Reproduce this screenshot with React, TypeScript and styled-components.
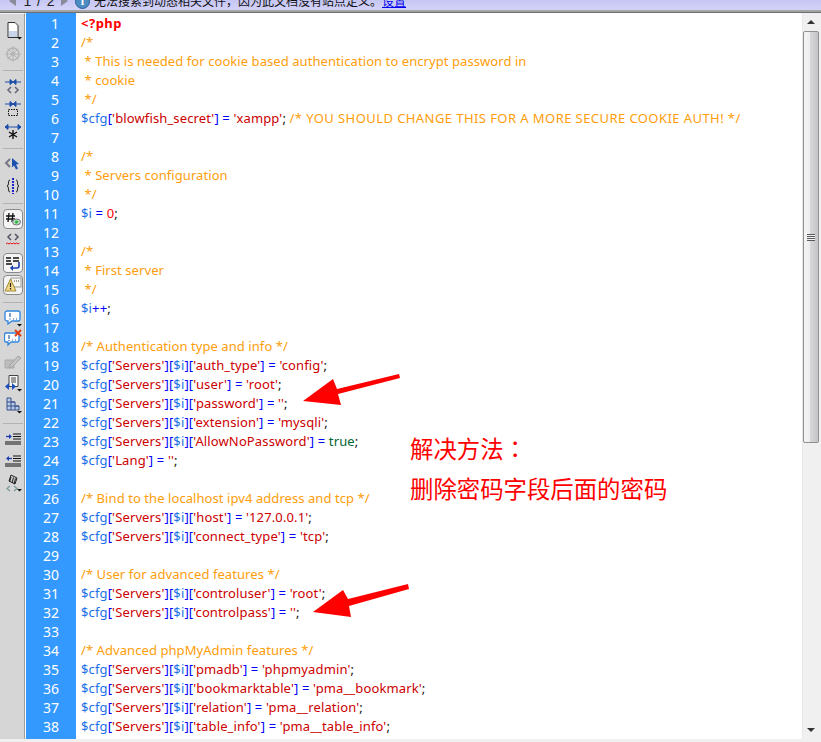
import React from 'react';
import styled, { createGlobalStyle } from 'styled-components';

const GlobalStyle = createGlobalStyle`
  html, body {
    margin: 0;
    padding: 0;
    width: 821px;
    height: 742px;
    overflow: hidden;
    background: #f0f0f0;
  }
`;

const Window = styled.div`
  position: relative;
  width: 821px;
  height: 742px;
  overflow: hidden;
  display: flex;
  flex-direction: column;
`;

const InfoBar = styled.div`
  height: 10px;
  flex: none;
  overflow: hidden;
  display: flex;
  align-items: flex-end;
  background: linear-gradient(#c6c6f4, #d3d3f8);
  font: 12px 'Noto Sans CJK SC', sans-serif;
  color: #111;
`;

const InfoInner = styled.div`
  height: 16px;
  margin-bottom: 1px;
  flex: none;
  display: flex;
  align-items: center;
  line-height: 16px;
`;

const Pager = styled.span`
  width: 34px;
  text-align: center;
  font-family: 'Liberation Sans', sans-serif;
  font-size: 14px;
  word-spacing: 2px;
  color: #222;
`;

const PagerArrow = styled.span<{ $left?: boolean }>`
  width: 0;
  height: 0;
  margin: ${(p) => (p.$left ? '0 6px 0 9px' : '0 7px 0 5px')};
  border-top: 5px solid transparent;
  border-bottom: 5px solid transparent;
  ${(p) => (p.$left ? 'border-right: 7px solid #8a8a98;' : 'border-left: 7px solid #8a8a98;')}
`;

const InfoIcon = styled.span`
  width: 13px;
  height: 13px;
  margin-right: 4px;
  border-radius: 50%;
  border: 1px solid #2a5f96;
  background: #4a8cc4;
  color: #fff;
  font: bold 12px/13px 'Liberation Serif', serif;
  text-align: center;
`;

const InfoLink = styled.a`
  color: #0000ee;
  text-decoration: underline;
`;

const BarEdge = styled.div`
  height: 3px;
  flex: none;
  background: linear-gradient(#a8a8a8 0, #a0a0a0 66%, #6f6f6f 66%);
`;

const Main = styled.div`
  height: 726px;
  flex: none;
  display: flex;
  background: #fff;
`;

const Sidebar = styled.div`
  width: 25px;
  flex: none;
  box-sizing: border-box;
  padding: 7px 0 0 1px;
  background: #d6d6d6;
  border-top: 1px solid #f2f2f2;
  border-right: 1px solid #9c9c9c;
  display: flex;
  flex-direction: column;
  align-items: center;
`;

const ToolSlot = styled.div<{ $gap?: number; $boxed?: boolean }>`
  width: 20px;
  height: 20px;
  flex: none;
  box-sizing: border-box;
  margin-top: ${(p) => p.$gap ?? 0}px;
  display: flex;
  align-items: center;
  justify-content: center;
  ${(p) =>
    p.$boxed &&
    `
    border: 1px solid #8a8a8a;
    border-radius: 4px;
    background: #f4f4f4;
  `}
`;

const ToolSep = styled.div<{ $gap: number }>`
  width: 20px;
  height: 1px;
  flex: none;
  margin-top: ${(p) => p.$gap}px;
  background: #b2b2b2;
`;

const WhiteEdge = styled.div`
  width: 1px;
  flex: none;
  background: #fff;
`;

const Gutter = styled.div`
  width: 50px;
  flex: none;
  box-sizing: border-box;
  padding: 1px 17px 0 0;
  overflow: hidden;
  background: #3399ff;
  color: #fff;
  text-align: right;
  font: 14px/19px 'Noto Sans', sans-serif;
`;

const Code = styled.div`
  flex: 1;
  min-width: 0;
  box-sizing: border-box;
  padding: 1px 0 0 5px;
  overflow: hidden;
  background: #fff;
  font: 13px/19px 'Noto Sans', sans-serif;
  letter-spacing: 0.13px;
`;

const CodeLine = styled.div`
  height: 19px;
  white-space: pre;
`;

const tokenColors: Record<string, string> = {
  tag: '#ff0000',
  comment: '#ff9d0a',
  shout: '#ff9d0a',
  variable: '#1c72e8',
  string: '#cc0000',
  op: '#0000ff',
  number: '#ff0000',
  bool: '#006633',
  plain: '#111111',
};

const tokenSpacing: Record<string, string> = {
  tag: '0.5px',
  comment: '0.07px',
  shout: '0.43px',
};

const Token = styled.span<{ $kind: string }>`
  color: ${(p) => tokenColors[p.$kind]};
  font-weight: ${(p) => (p.$kind === 'tag' ? 700 : 400)};
  letter-spacing: ${(p) => tokenSpacing[p.$kind] ?? 'inherit'};
`;

const Scrollbar = styled.div`
  width: 16px;
  flex: none;
  display: flex;
  flex-direction: column;
  align-items: stretch;
  background: #f0f0f0;
  border-left: 1px solid #e8e8e8;
  box-sizing: content-box;
`;

const ScrollButton = styled.div`
  height: 18px;
  flex: none;
  display: flex;
  align-items: center;
  justify-content: center;
`;

const ScrollArrow = styled.span<{ $down?: boolean }>`
  width: 0;
  height: 0;
  border-left: 4px solid transparent;
  border-right: 4px solid transparent;
  ${(p) => (p.$down ? 'border-top: 4px solid #333;' : 'border-bottom: 4px solid #333;')}
`;

const Thumb = styled.div`
  height: 412px;
  flex: none;
  box-sizing: border-box;
  display: flex;
  align-items: center;
  justify-content: center;
  border: 1px solid #8e8f8f;
  border-radius: 2px;
  background: linear-gradient(90deg, #f4f4f4 0, #eeeeee 40%, #d8d8da 45%, #c4c4c8 100%);
`;

const Grip = styled.div`
  width: 8px;
  height: 7px;
  background: repeating-linear-gradient(#59595c 0, #59595c 1px, #f2f2f2 1px, #f2f2f2 2px);
`;

const ScrollRest = styled.div`
  flex: 1;
`;

const RightEdge = styled.div`
  width: 2px;
  flex: none;
  background: #f0f0f0;
`;

const BottomEdge = styled.div`
  flex: 1;
  background: #f0f0f0;
`;

const Note = styled.div`
  position: absolute;
  left: 410px;
  top: 428px;
  color: #ff0000;
  font: 23.400px/40px 'Noto Sans CJK SC', sans-serif;
  white-space: nowrap;
`;

const NoteColon = styled.span`
  font-family: 'Noto Sans CJK TC', sans-serif;
`;

const ArrowLayer = styled.svg`
  position: absolute;
  left: 0;
  top: 0;
  pointer-events: none;
`;

const source = [
  '<?php',
  '/*',
  ' * This is needed for cookie based authentication to encrypt password in',
  ' * cookie',
  ' */',
  "$cfg['blowfish_secret'] = 'xampp'; /* YOU SHOULD CHANGE THIS FOR A MORE SECURE COOKIE AUTH! */",
  '',
  '/*',
  ' * Servers configuration',
  ' */',
  '$i = 0;',
  '',
  '/*',
  ' * First server',
  ' */',
  '$i++;',
  '',
  '/* Authentication type and info */',
  "$cfg['Servers'][$i]['auth_type'] = 'config';",
  "$cfg['Servers'][$i]['user'] = 'root';",
  "$cfg['Servers'][$i]['password'] = '';",
  "$cfg['Servers'][$i]['extension'] = 'mysqli';",
  "$cfg['Servers'][$i]['AllowNoPassword'] = true;",
  "$cfg['Lang'] = '';",
  '',
  '/* Bind to the localhost ipv4 address and tcp */',
  "$cfg['Servers'][$i]['host'] = '127.0.0.1';",
  "$cfg['Servers'][$i]['connect_type'] = 'tcp';",
  '',
  '/* User for advanced features */',
  "$cfg['Servers'][$i]['controluser'] = 'root';",
  "$cfg['Servers'][$i]['controlpass'] = '';",
  '',
  '/* Advanced phpMyAdmin features */',
  "$cfg['Servers'][$i]['pmadb'] = 'phpmyadmin';",
  "$cfg['Servers'][$i]['bookmarktable'] = 'pma__bookmark';",
  "$cfg['Servers'][$i]['relation'] = 'pma__relation';",
  "$cfg['Servers'][$i]['table_info'] = 'pma__table_info';",
  "$cfg['Servers'][$i]['table_coords'] = 'pma__table_coords';",
];

const tokenize = (line: string): { kind: string; text: string }[] => {
  if (line === '<?php') return [{ kind: 'tag', text: line }];
  if (/^\s*(\/\*|\*)/.test(line)) return [{ kind: 'comment', text: line }];
  return line
    .split(/(\/\*.*\*\/|'[^']*'|\$\w+|\+\+|[[\]=]|true|\b\d+\b)/)
    .filter(Boolean)
    .map((text) => {
      let kind = 'plain';
      if (text.startsWith('/*')) kind = 'shout';
      else if (text.startsWith("'")) kind = 'string';
      else if (text.startsWith('$')) kind = 'variable';
      else if (/^(\+\+|\[|\]|=)$/.test(text)) kind = 'op';
      else if (text === 'true') kind = 'bool';
      else if (/^\d+$/.test(text)) kind = 'number';
      return { kind, text };
    });
};

const Icon = ({ children }: { children: React.ReactNode }) => (
  <svg width="18" height="18" viewBox="0 0 18 18" fill="none">
    {children}
  </svg>
);

const DropTick = () => <path d="M13 15h5l-2.500 2.500z" fill="#111" />;

const CodeChevrons = ({ y = 11, color = '#667' }: { y?: number; color?: string }) => (
  <path d={`M7 ${y - 3}l-3 3 3 3M11 ${y - 3}l3 3-3 3`} stroke={color} strokeWidth="1.500" />
);

const CollapseArrows = () => (
  <path d="M1 4h5M6 1.500v5L9 4zM17 4h-5M12 1.500v5L9 4z" fill="#1f4fa8" stroke="#1f4fa8" />
);

const icons: Record<string, React.ReactNode> = {
  page: (
    <>
      <path d="M4 .500h7l3 3v12H4z" fill="#fff" stroke="#333" />
      <path d="M5 9h8v6H5z" fill="#c8d4e8" />
      <DropTick />
    </>
  ),
  wheel: (
    <>
      <circle cx="9" cy="9" r="6" stroke="#b4b4b4" strokeWidth="1.500" />
      <circle cx="9" cy="9" r="2" stroke="#b4b4b4" />
      <path d="M9 1v16M1 9h16M3.500 3.500l11 11M14.500 3.500l-11 11" stroke="#b4b4b4" />
    </>
  ),
  collapseCode: (
    <>
      <CollapseArrows />
      <CodeChevrons y={12} />
    </>
  ),
  collapseBox: (
    <>
      <CollapseArrows />
      <rect x="4.500" y="9.500" width="9" height="6" stroke="#111" strokeDasharray="1.500 1" />
    </>
  ),
  collapseStar: (
    <>
      <path d="M1 4h16M4 1.500v5L1 4zM14 1.500v5L17 4z" fill="#1f4fa8" stroke="#1f4fa8" />
      <path d="M9 7v9M5 9l8 5M13 9l-8 5" stroke="#111" strokeWidth="1.400" />
    </>
  ),
  cursorCode: (
    <>
      <path d="M6 5L2 9l4 4" stroke="#778" strokeWidth="2" />
      <path d="M8 4l7 6-3 .500 2 4-2 1-2-4-2 2z" fill="#1d4fb0" />
    </>
  ),
  braces: (
    <>
      <path d="M6 3C3.500 3 5.500 8.500 3 9c2.500.500.500 6 3 6M12 3c2.500 0 .500 5.500 3 6-2.500.500-.500 6-3 6" stroke="#111" />
      <path d="M9 1v16" stroke="#2222cc" strokeWidth="2" strokeDasharray="2 1" />
    </>
  ),
  hash: (
    <>
      <path d="M5 3L4 12M9 3l-1 9M2 6h9M2 9h9" stroke="#111" strokeWidth="1.300" />
      <ellipse cx="12.500" cy="12" rx="4" ry="3" fill="#bcd8bc" stroke="#778" />
      <circle cx="12.500" cy="12" r="1.600" fill="#22bb44" />
    </>
  ),
  redCode: (
    <>
      <CodeChevrons y={7} color="#556" />
      <path d="M2 14l1.500-1 1.500 1 1.500-1 1.500 1 1.500-1 1.500 1 1.500-1 1.500 1 1.500-1" stroke="#e01010" />
    </>
  ),
  wrap: (
    <>
      <path d="M2 4h5M9 4h6M2 7h5M9 7h6M2 10h6" stroke="#111" strokeWidth="1.300" />
      <path d="M15 8v4c0 1.500-1 2-2 2H7" stroke="#1c3fb0" strokeWidth="1.600" />
      <path d="M9 11l-3 3 3 3z" fill="#1c3fb0" />
    </>
  ),
  warning: (
    <>
      <rect x="7" y="2" width="10" height="9" fill="#f6f6ee" stroke="#999" />
      <path d="M10 5h1M12 5h1M14 5h1" stroke="#444" />
      <path d="M6.500 3L1 15h11z" fill="#f2d884" stroke="#a08a30" />
      <path d="M6.500 7v4M6.500 12v1.500" stroke="#222" strokeWidth="1.200" />
    </>
  ),
  bubble: (
    <>
      <path d="M3 2h11c1 0 2 1 2 2v6c0 1-1 2-2 2H8l-4 3v-3H3c-1 0-2-1-2-2V4c0-1 1-2 2-2z" fill="#fff" stroke="#2f86dc" strokeWidth="1.300" />
      <path d="M6 4v4M6 9.500v1M9 10h1M12 10h1" stroke="#1c50a0" strokeWidth="1.100" />
      <DropTick />
    </>
  ),
  bubbleX: (
    <>
      <path d="M2 4h11c1 0 2 1 2 2v5c0 1-1 2-2 2H7l-3 3v-3H2c-1 0-1.500-1-1.500-2V6C.5 5 1 4 2 4z" fill="#fff" stroke="#2f86dc" strokeWidth="1.300" />
      <path d="M5 6v4M5 11v1M8 11h1M11 11h1" stroke="#1c50a0" strokeWidth="1.100" />
      <path d="M11 1l6 6M17 1l-6 6" stroke="#e03c14" strokeWidth="2" />
    </>
  ),
  pencil: (
    <>
      <path d="M1 7h9v8H1z" fill="#bcbcbc" stroke="#aaa" />
      <path d="M6 12l8-9 3 2-9 9-3 1z" fill="#c4c4c4" stroke="#a4a4a4" />
    </>
  ),
  docCode: (
    <>
      <path d="M5 1.500h9v11H5z" fill="#f8f8f8" stroke="#444" />
      <path d="M7 4h5M7 6h5M7 8h5" stroke="#444" />
      <path d="M5 9l-4 3.500L5 16z" fill="#1c4fc0" />
      <path d="M8 9l4 3.500L8 16z" fill="#1c4fc0" />
      <DropTick />
    </>
  ),
  table: (
    <>
      <path d="M3 2h4v4h4v4h4v4H3z" fill="#b8cce8" stroke="#3a4f88" />
      <path d="M3 6h8M3 10h12M7 6v8M11 10v4" stroke="#3a4f88" />
      <DropTick />
    </>
  ),
  indent: (
    <>
      <path d="M1 15h16M1 13h16M9 10h8M9 7.500h8M9 5h8" stroke="#111" />
      <path d="M2 7.500h4" stroke="#1c3fb0" strokeWidth="1.300" />
      <path d="M5 5l3 2.500L5 10z" fill="#1c3fb0" />
    </>
  ),
  outdent: (
    <>
      <path d="M1 15h16M1 13h16M9 10h8M9 7.500h8M9 5h8" stroke="#111" />
      <path d="M4 7.500h4" stroke="#1c3fb0" strokeWidth="1.300" />
      <path d="M5 5L2 7.500 5 10z" fill="#1c3fb0" />
    </>
  ),
  brush: (
    <>
      <path d="M7 1l6 3-2 6-6-3z" fill="#ccc" stroke="#222" />
      <path d="M7 3L5.500 8M9.500 3.500L8 9M11.500 4.500L10 10" stroke="#222" />
      <path d="M6 12l-3 2.500L6 17M10 12l3 2.500L10 17" stroke="#7d9a9a" strokeWidth="1.300" />
      <DropTick />
    </>
  ),
};

type ToolEntry = { icon?: string; gap: number; boxed?: boolean };

const tools: ToolEntry[] = [
  { icon: 'page', gap: 0 },
  { icon: 'wheel', gap: 3 },
  { gap: 6 },
  { icon: 'collapseCode', gap: 6 },
  { icon: 'collapseBox', gap: 2 },
  { icon: 'collapseStar', gap: 3 },
  { gap: 6 },
  { icon: 'cursorCode', gap: 4 },
  { icon: 'braces', gap: 3 },
  { gap: 7 },
  { icon: 'hash', gap: 5, boxed: true },
  { icon: 'redCode', gap: 0 },
  { icon: 'wrap', gap: 4, boxed: true },
  { icon: 'warning', gap: 2, boxed: true },
  { gap: 7 },
  { icon: 'bubble', gap: 5 },
  { icon: 'bubbleX', gap: 0 },
  { icon: 'pencil', gap: 4 },
  { icon: 'docCode', gap: 1 },
  { icon: 'table', gap: 2 },
  { gap: 8 },
  { icon: 'indent', gap: 4 },
  { icon: 'outdent', gap: 2 },
  { icon: 'brush', gap: 3 },
];

const App = () => {
  return (
    <Window>
      <GlobalStyle />
      <InfoBar>
        <InfoInner>
          <PagerArrow $left />
          <Pager>1 / 2</Pager>
          <PagerArrow />
          <InfoIcon>i</InfoIcon>
          <span>无法搜索到动态相关文件，因为此文档没有站点定义。</span>
          <InfoLink>设置</InfoLink>
        </InfoInner>
      </InfoBar>
      <BarEdge />
      <Main>
        <Sidebar>
          {tools.map((tool, i) =>
            tool.icon ? (
              <ToolSlot key={i} $gap={tool.gap} $boxed={tool.boxed}>
                <Icon>{icons[tool.icon]}</Icon>
              </ToolSlot>
            ) : (
              <ToolSep key={i} $gap={tool.gap} />
            ),
          )}
        </Sidebar>
        <WhiteEdge />
        <Gutter>
          {source.map((_, i) => (
            <div key={i}>{i + 1}</div>
          ))}
        </Gutter>
        <Code>
          {source.map((line, i) => (
            <CodeLine key={i}>
              {tokenize(line).map((t, j) => (
                <Token key={j} $kind={t.kind}>
                  {t.text}
                </Token>
              ))}
            </CodeLine>
          ))}
        </Code>
        <Scrollbar>
          <ScrollButton>
            <ScrollArrow />
          </ScrollButton>
          <Thumb>
            <Grip />
          </Thumb>
          <ScrollRest />
          <ScrollButton>
            <ScrollArrow $down />
          </ScrollButton>
        </Scrollbar>
        <RightEdge />
      </Main>
      <BottomEdge />
      <Note>
        <div>
          解决方法<NoteColon>：</NoteColon>
        </div>
        <div>删除密码字段后面的密码</div>
      </Note>
      <ArrowLayer width="821" height="742" viewBox="0 0 821 742">
        <path d="M303 401L333 379L337 389L399 374L400 378L338 394L341 405Z" fill="#ff0000" />
        <path d="M313 612L343 590L348 599L408 584L409 589L349 606L351 617Z" fill="#ff0000" />
      </ArrowLayer>
    </Window>
  );
};

export default App;
